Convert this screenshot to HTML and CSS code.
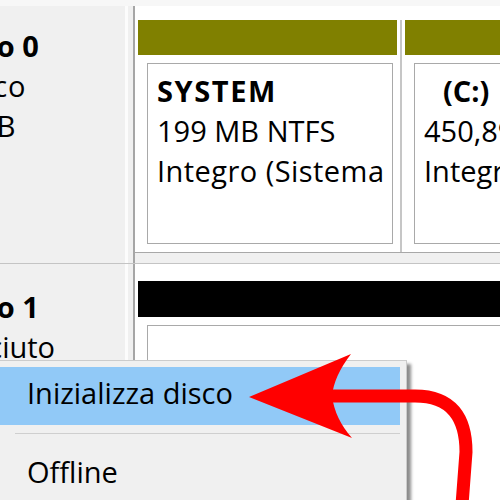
FILE: index.html
```html
<!DOCTYPE html>
<html lang="it">
<head>
<meta charset="utf-8">
<title>Gestione disco</title>
<link rel="stylesheet" href="styles.css">
</head>
<body>
<div class="screen">
  <div class="topbar"></div>

  <div class="disk disk0">
    <div class="label">
      <div class="label-text">
        <div class="strong"><svg class="disk-icon" width="40" height="30" viewBox="0 0 40 30"><rect x="2" y="8" width="36" height="16" fill="#9aa4ad" stroke="#555"/></svg>Disco 0</div>
        <div class="loose">Dinamico</div>
        <div class="narrow">465,76 GB</div>
        <div>Online</div>
      </div>
    </div>
    <div class="area">
      <div class="part part-system">
        <div class="bar olive"></div>
        <div class="box">
          <div class="box-text">
            <div class="strong wide">SYSTEM</div>
            <div>199 MB NTFS</div>
            <div class="spread">Integro (Sistema, Partizione attiva)</div>
          </div>
        </div>
      </div>
      <div class="divider"></div>
      <div class="part part-c">
        <div class="bar olive"></div>
        <div class="box">
          <div class="box-text">
            <div class="strong indent">(C:)</div>
            <div>450,89 GB NTFS</div>
            <div>Integro (Avvio, File di paging, Arresto anomalo del sistema)</div>
          </div>
        </div>
      </div>
    </div>
  </div>

  <div class="disk disk1">
    <div class="label">
      <div class="label-text">
        <div class="strong"><svg class="disk-icon" width="40" height="30" viewBox="0 0 40 30"><rect x="2" y="8" width="36" height="16" fill="#9aa4ad" stroke="#555"/></svg>Disco 1</div>
        <div>Sconosciuto</div>
      </div>
    </div>
    <div class="area">
      <div class="part part-free">
        <div class="bar black"></div>
        <div class="box"></div>
      </div>
    </div>
  </div>

  <div class="menu">
    <div class="item active">Inizializza disco</div>
    <div class="separator"></div>
    <div class="item">Offline</div>
  </div>

  <svg class="arrow" width="500" height="500" viewBox="0 0 500 500">
    <path d="M 325 396 L 415 396 C 452 396 466 418 466 452 L 462 505" fill="none" stroke="#ff0000" stroke-width="13"/>
    <path d="M 249 397 L 351 354 Q 334 376 332 396 Q 335 419 352 438 Z" fill="#ff0000"/>
  </svg>
</div>
</body>
</html>
```

FILE: styles.css
```css
html, body {
  margin: 0;
  padding: 0;
  background: #f0f0f0;
}

.screen {
  position: relative;
  width: 500px;
  height: 500px;
  overflow: hidden;
  background: #f0f0f0;
  font-family: "Open Sans", "Noto Sans", sans-serif;
  font-size: 29px;
  line-height: 40px;
  color: #000;
}

.strong {
  font-weight: 700;
}

.wide {
  letter-spacing: 1.6px;
}

.loose {
  letter-spacing: 0.8px;
}

.narrow {
  letter-spacing: -1.8px;
}

.spread {
  letter-spacing: 0.45px;
}

.topbar {
  height: 6px;
  background: #f7f7f7;
}

.disk {
  display: flex;
  align-items: flex-start;
}

.disk0 {
  height: 257px;
  border-bottom: 1px solid #c4c4c4;
}

.disk1 {
  height: 300px;
}

.label {
  flex: none;
  width: 133px;
  height: 100%;
  overflow: hidden;
  background: #f0f0f0;
  border-right: 2px solid #a6a6a6;
  box-shadow: inset -5px 0 0 #f0f0f0, inset -8px 0 0 #fcfcfc;
}

.label-text {
  margin-left: -108px;
  white-space: nowrap;
}

.disk0 .label-text {
  padding-top: 20px;
}

.disk1 .label-text {
  padding-top: 23px;
}

.disk-icon {
  display: inline-block;
  vertical-align: middle;
  margin-right: 5px;
}

.area {
  flex: 1;
  display: flex;
  min-width: 0;
  background: #fff;
  padding-left: 3px;
}

.disk0 .area {
  height: 232px;
  padding-top: 14px;
  border-bottom: 1px solid #a8a8a8;
}

.disk1 .area {
  height: 300px;
  padding-top: 17px;
}

.part {
  display: flex;
  flex-direction: column;
  flex: none;
}

.part-system {
  width: 259px;
}

.part-c {
  width: 300px;
}

.part-free {
  width: 420px;
}

.divider {
  flex: none;
  width: 2px;
  margin: 0 3px;
  background: #c6c6c6;
}

.bar {
  flex: none;
  height: 35px;
}

.bar.olive {
  background: #808000;
}

.bar.black {
  height: 36px;
  background: #000;
}

.box {
  flex: 1;
  margin: 8px 4px 8px 9px;
  padding: 7px 0 0 9px;
  border: 1px solid #a9a9a9;
  background: #fff;
  overflow: hidden;
  white-space: nowrap;
}

.box-text {
  margin-right: 9px;
  overflow: hidden;
}

.indent {
  padding-left: 19px;
}

.menu {
  position: absolute;
  left: -20px;
  top: 360px;
  width: 427px;
  box-sizing: border-box;
  padding: 6px 6px 10px 2px;
  background: #f0f0f0;
  border: 1px solid #cccccc;
  box-shadow: 4px 4px 3px rgba(0, 0, 0, 0.45);
}

.item {
  height: 58px;
  line-height: 52px;
  padding-left: 44px;
  white-space: nowrap;
}

.item.active {
  background: #91c9f7;
}

.separator {
  height: 1px;
  margin: 8px 0 12px 32px;
  background: #cfcfcf;
}

.arrow {
  position: absolute;
  left: 0;
  top: 0;
  pointer-events: none;
}
```
